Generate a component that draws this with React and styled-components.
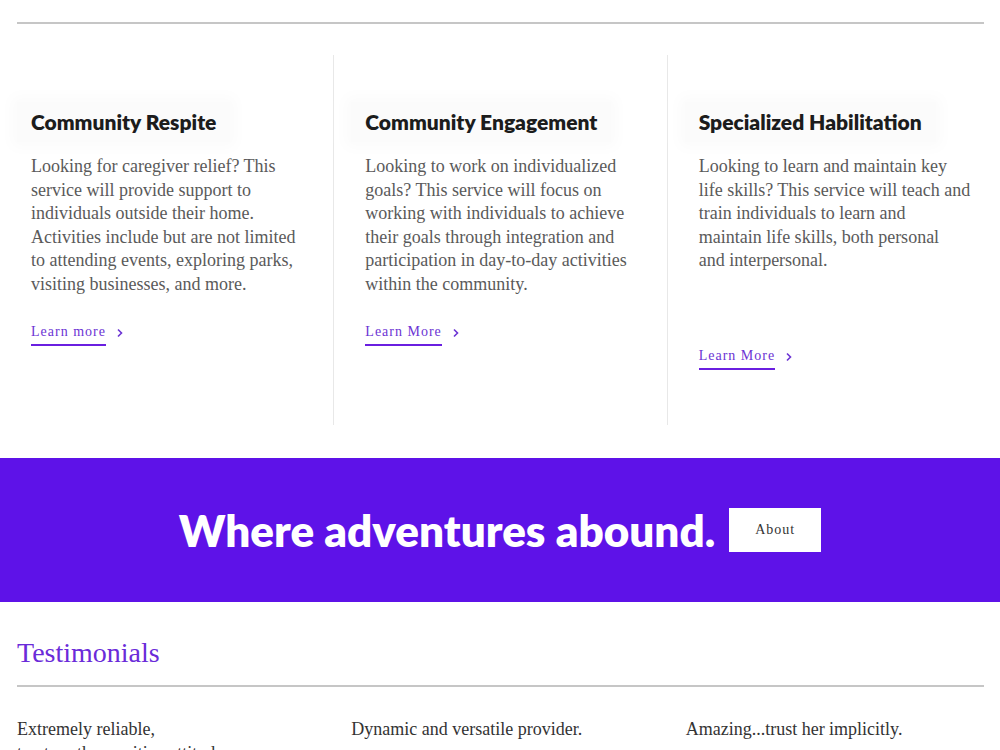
import styled, { createGlobalStyle } from 'styled-components'

const GlobalStyle = createGlobalStyle`
  body {
    margin: 0;
    background: #fff;
    font-family: "Liberation Serif", serif;
  }
`

const Page = styled.div`
  width: 1000px;
  overflow: hidden;
`

const Rule = styled.div`
  margin: ${(props) => props.top || 0}px ${(props) => (props.inset ? '16px 0 17px' : '0 0 0')};
  border-top: 2px solid #c6c6c6;
`

const Services = styled.div`
  display: grid;
  grid-template-columns: repeat(3, 1fr);
  margin-top: 31px;
  height: 370px;
`

const Service = styled.div`
  display: flex;
  flex-direction: column;
  align-items: flex-start;
  padding: 47px 20px 0 31px;
  border-left: ${(props) => (props.first ? 'none' : '1px solid #e8e8e8')};
`

const ServiceTitle = styled.h3`
  margin: 0 0 0 -14px;
  padding: 6px 14px;
  font-family: Lato, "Open Sans", sans-serif;
  font-weight: 800;
  font-size: 21px;
  line-height: 28px;
  color: #1c1c1c;
  background: #fbfbfb;
  box-shadow: 0 0 14px 6px #fbfbfb;
`

const ServiceText = styled.p`
  max-width: 274px;
  margin: 13px 0 0;
  font-size: 18px;
  line-height: 23.5px;
  color: #5a5a5a;
`

const LearnLink = styled.a`
  display: flex;
  align-items: center;
  gap: 10px;
  margin-top: ${(props) => props.offset}px;
  color: #6c34d4;
  font-size: 14px;
  letter-spacing: 1px;
  text-decoration: none;
  cursor: pointer;
`

const LinkLabel = styled.span`
  padding-bottom: 4px;
  border-bottom: 2px solid #6a1fe0;
`

const Chevron = styled.svg`
  width: 8px;
  height: 10px;
  margin-bottom: 4px;
`

const Banner = styled.section`
  display: flex;
  align-items: center;
  justify-content: center;
  gap: 14px;
  height: 144px;
  margin-top: 33px;
  background: #5e12e8;
`

const BannerTitle = styled.h2`
  margin: 0;
  font-family: Lato, "Open Sans", sans-serif;
  font-weight: 800;
  font-size: 44px;
  color: #fff;
`

const AboutButton = styled.button`
  width: 92px;
  height: 44px;
  border: none;
  background: #fff;
  color: #333;
  font-family: "Liberation Serif", serif;
  font-size: 14px;
  letter-spacing: 1px;
  cursor: pointer;
`

const Testimonials = styled.section`
  padding: 0 16px 0 17px;
`

const SectionTitle = styled.h2`
  margin: 34px 0 0;
  font-weight: normal;
  font-size: 28px;
  line-height: 34px;
  color: #6a2bd9;
`

const QuoteGrid = styled.div`
  display: grid;
  grid-template-columns: repeat(3, 1fr);
  gap: 36px;
  margin-top: 31px;
`

const Quote = styled.p`
  margin: 0;
  font-size: 18px;
  line-height: 23.5px;
  color: #333;
`

const services = [
  {
    title: 'Community Respite',
    text: 'Looking for caregiver relief? This service will provide support to individuals outside their home. Activities include but are not limited to attending events, exploring parks, visiting businesses, and more.',
    link: 'Learn more',
    offset: 28,
  },
  {
    title: 'Community Engagement',
    text: 'Looking to work on individualized goals? This service will focus on working with individuals to achieve their goals through integration and participation in day-to-day activities within the community.',
    link: 'Learn More',
    offset: 28,
  },
  {
    title: 'Specialized Habilitation',
    text: 'Looking to learn and maintain key life skills? This service will teach and train individuals to learn and maintain life skills, both personal and\u00a0interpersonal.',
    link: 'Learn More',
    offset: 75,
  },
]

const quotes = [
  ['Extremely reliable,', 'trustworthy, positive attitude.'],
  ['Dynamic and versatile provider.'],
  ['Amazing...trust her implicitly.'],
]

const App = () => {
  return (
    <Page>
      <GlobalStyle />
      <Rule top={22} inset />
      <Services>
        {services.map((s, i) => (
          <Service key={s.title} first={i === 0}>
            <ServiceTitle>{s.title}</ServiceTitle>
            <ServiceText>{s.text}</ServiceText>
            <LearnLink offset={s.offset}>
              <LinkLabel>{s.link}</LinkLabel>
              <Chevron viewBox="0 0 8 10">
                <path d="M2 1.5 L5.5 5 L2 8.5" fill="none" stroke="#6c34d4" strokeWidth="1.6" />
              </Chevron>
            </LearnLink>
          </Service>
        ))}
      </Services>

      <Banner>
        <BannerTitle>Where adventures abound.</BannerTitle>
        <AboutButton>About</AboutButton>
      </Banner>

      <Testimonials>
        <SectionTitle>Testimonials</SectionTitle>
        <Rule top={15} />
        <QuoteGrid>
          {quotes.map((lines) => (
            <Quote key={lines[0]}>
              {lines.map((line, i) => (
                <span key={line}>
                  {i > 0 && <br />}
                  {line}
                </span>
              ))}
            </Quote>
          ))}
        </QuoteGrid>
      </Testimonials>
    </Page>
  )
}

export default App
